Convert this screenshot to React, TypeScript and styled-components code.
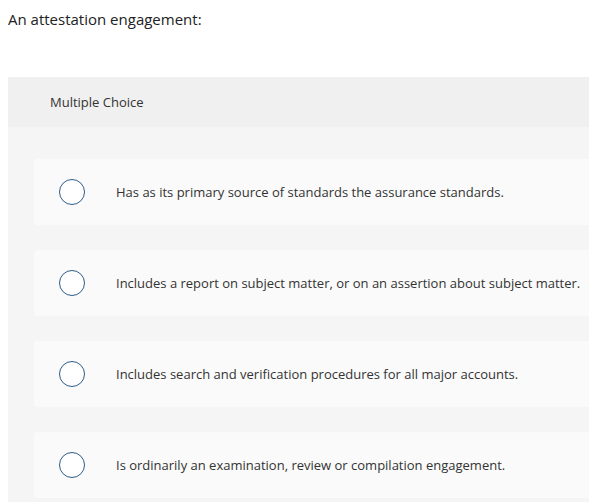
import styled, { createGlobalStyle } from "styled-components";

const GlobalStyle = createGlobalStyle`
  body {
    margin: 8px 8px 0;
    background: #ffffff;
    font-family: "Open Sans", "Liberation Sans", Arial, sans-serif;
    color: #333333;
  }
`;

const choices = [
  "Has as its primary source of standards the assurance standards.",
  "Includes a report on subject matter, or on an assertion about subject matter.",
  "Includes search and verification procedures for all major accounts.",
  "Is ordinarily an examination, review or compilation engagement.",
];

export default function App() {
  return (
    <>
      <GlobalStyle />
      <Question>An attestation engagement:</Question>
      <Panel>
        <PanelHeader>Multiple Choice</PanelHeader>
        <ChoiceList>
          {choices.map((c) => (
            <Choice key={c}>
              <Radio />
              <ChoiceText>{c}</ChoiceText>
            </Choice>
          ))}
        </ChoiceList>
      </Panel>
    </>
  );
}

const Question = styled.div`
  font-size: 15px;
  line-height: 20px;
  color: #222222;
  padding-top: 1px;
  margin-bottom: 48px;
`;

const Panel = styled.div`
  margin-right: -8px;
  background: #f5f5f5;
`;

const PanelHeader = styled.div`
  height: 50px;
  display: flex;
  align-items: center;
  padding-left: 42px;
  background: #f0f0f0;
  font-size: 13px;
  color: #333333;
`;

const ChoiceList = styled.div`
  display: flex;
  flex-direction: column;
  gap: 25px;
  padding: 32px 0 4px 26px;
`;

const Choice = styled.div`
  height: 66px;
  display: flex;
  align-items: center;
  background: #fafafa;
  border-radius: 4px 0 0 4px;
  padding-left: 25px;
`;

const Radio = styled.span`
  width: 24px;
  height: 24px;
  border: 1.5px solid #2d5b88;
  border-radius: 50%;
  background: #ffffff;
  flex-shrink: 0;
`;

const ChoiceText = styled.span`
  margin-left: 31px;
  font-size: 13px;
  color: #333333;
`;
